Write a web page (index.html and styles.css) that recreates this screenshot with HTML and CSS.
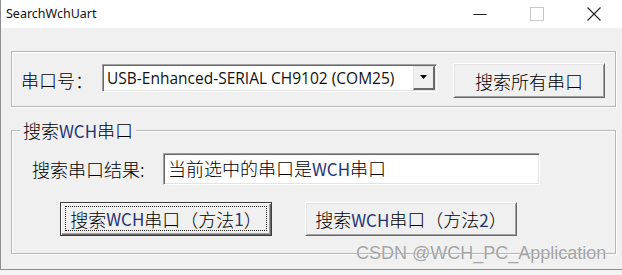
FILE: index.html
```html
<!DOCTYPE html>
<html lang="zh-CN">
<head>
    <meta charset="UTF-8" />
    <title>SearchWchUart</title>
    <link rel="stylesheet" href="styles.css">
</head>
<body>
    <div class="window">
        <div class="titlebar">
            <span class="title">SearchWchUart</span>
            <div class="caption-buttons">
                <span class="cap">
                    <svg width="14" height="14" viewBox="0 0 14 14"><line x1="0.5" y1="7.5" x2="13.5" y2="7.5" stroke="#222" stroke-width="1"/></svg>
                </span>
                <span class="cap">
                    <svg width="14" height="14" viewBox="0 0 14 14"><rect x="0.5" y="0.5" width="13" height="13" fill="none" stroke="#c8c8c8" stroke-width="1"/></svg>
                </span>
                <span class="cap">
                    <svg width="14" height="14" viewBox="0 0 14 14"><path d="M0.5 0.5 L13.5 13.5 M13.5 0.5 L0.5 13.5" stroke="#222" stroke-width="1.1"/></svg>
                </span>
            </div>
        </div>

        <div class="client">
            <div class="group group-port">
                <span class="label label-port">串口号：</span>
                <div class="combo sunken">
                    <span class="combo-text">USB-Enhanced-SERIAL CH9102 (COM25)</span>
                    <span class="combo-arrow">
                        <svg width="8" height="5" viewBox="0 0 8 5"><path d="M0 0 H7 L3.5 4 Z" fill="#000"/></svg>
                    </span>
                </div>
                <button class="btn btn-all">搜索所有串口</button>
            </div>

            <div class="group group-search">
                <span class="group-caption">搜索<span class="latin">WCH</span>串口</span>
                <div class="row">
                    <span class="label label-result">搜索串口结果:</span>
                    <div class="edit sunken">当前选中的串口是<span class="latin">WCH</span>串口</div>
                </div>
                <div class="row buttons">
                    <button class="btn btn-default"><span class="focus">搜索<span class="latin">WCH</span>串口（方法<span class="latin">1</span>）</span></button>
                    <button class="btn">搜索<span class="latin">WCH</span>串口（方法<span class="latin">2</span>）</button>
                </div>
            </div>
        </div>

        <div class="watermark">CSDN @WCH_PC_Application</div>
    </div>
</body>
</html>
```

FILE: styles.css
```css
body {
    margin: 0;
    background-color: #f4f4f4;
    font-family: "Noto Sans CJK SC", "Noto Sans", sans-serif;
    font-weight: 300;
    color: #000;
}

/* window frame */
.window {
    position: relative;
    width: 621px;
    height: 269px;
    background-color: #f0f0f0;
    border-left: 1px solid #8f8f8f;
    border-bottom: 1px solid #8f8f8f;
    box-shadow: 0 2px 3px rgba(0, 0, 0, 0.08);
    overflow: hidden;
}
.titlebar {
    height: 28px;
    background-color: #fff;
    display: flex;
    align-items: center;
    justify-content: space-between;
}
.title {
    padding-left: 5px;
    font-family: "Noto Sans", sans-serif;
    font-weight: 400;
    font-size: 12.5px;
    color: #111;
    margin-top: -1px;
}
.caption-buttons {
    display: flex;
    height: 28px;
}
.cap {
    width: 57px;
    display: flex;
    align-items: center;
    justify-content: center;
}

/* client area */
.client {
    padding: 23px 6px 0 10px;
}
.group {
    position: relative;
    border: 1px solid #b5b5b5;
    box-shadow: inset 1px 1px 0 #fff, 1px 1px 0 #fff;
}
.group-port {
    height: 54px;
    display: flex;
    align-items: center;
    padding-left: 9px;
}
.label {
    font-size: 18px;
    line-height: 1;
    white-space: nowrap;
}
.label-port {
    width: 81px;
    margin-top: 1px;
}
.latin {
    color: #1f3478;
    font-size: 17px;
    font-weight: 400;
}

/* classic 3d edges */
.sunken {
    border: 1px solid;
    border-color: #a0a0a0 #fff #fff #a0a0a0;
    box-shadow: inset 1px 1px 0 #696969, inset -1px -1px 0 #e3e3e3;
    background-color: #fff;
}
.btn {
    font-family: inherit;
    font-weight: 300;
    font-size: 18px;
    line-height: 1;
    color: #000;
    background-color: #f0f0f0;
    border: 1px solid;
    border-color: #fff #696969 #696969 #fff;
    box-shadow: inset 1px 1px 0 #e3e3e3, inset -1px -1px 0 #a0a0a0;
    padding: 0;
    margin: 0;
}

.combo {
    width: 335px;
    height: 28px;
    box-sizing: border-box;
    display: flex;
    align-items: center;
    margin-top: -2px;
}
.combo-text {
    flex: 1;
    padding-left: 4px;
    font-family: "Open Sans", sans-serif;
    font-weight: 400;
    font-size: 15.5px;
    color: #111;
    white-space: nowrap;
    overflow: hidden;
}
.combo-arrow {
    width: 22px;
    height: 24px;
    margin-right: 1px;
    box-sizing: border-box;
    background-color: #f0f0f0;
    border-left: 1px solid #e3e3e3;
    border-top: 1px solid #e3e3e3;
    border-right: 2px solid #696969;
    border-bottom: 2px solid #696969;
    display: flex;
    align-items: center;
    justify-content: center;
}
.btn-all {
    width: 152px;
    height: 35px;
    margin-left: 16px;
    margin-top: 3px;
}

.group-search {
    margin-top: 23px;
    padding: 22px 0 0 20px;
    box-sizing: border-box;
    height: 124px;
}
.group-caption {
    position: absolute;
    top: -12px;
    left: 8px;
    padding: 0 3px 0 3px;
    background-color: #f0f0f0;
    font-size: 18px;
    line-height: 22px;
}
.row {
    display: flex;
    align-items: center;
}
.label-result {
    width: 131px;
    margin-top: -1px;
}
.edit {
    width: 377px;
    height: 32px;
    box-sizing: border-box;
    padding-left: 4px;
    font-size: 18px;
    line-height: 28px;
    white-space: nowrap;
}
.buttons {
    margin-top: 17px;
    padding-left: 28px;
    gap: 33px;
}
.buttons .btn {
    width: 212px;
    height: 34px;
}
.btn-default {
    border: 1px solid #3c3c3c;
    box-shadow: inset 1px 1px 0 #fff, inset -1px -1px 0 #696969, inset -2px -2px 0 #a0a0a0;
    display: flex;
    padding: 3px 4px 4px 4px;
}
.focus {
    flex: 1;
    border: 1px dotted #222;
    display: flex;
    align-items: center;
    justify-content: center;
}

/* csdn watermark */
.watermark {
    position: absolute;
    left: 355px;
    top: 243px;
    font-family: "Liberation Sans", sans-serif;
    font-weight: 400;
    font-size: 18px;
    color: #a3a3a3;
    text-shadow: 0 0 1px #fff;
    white-space: nowrap;
}
```
